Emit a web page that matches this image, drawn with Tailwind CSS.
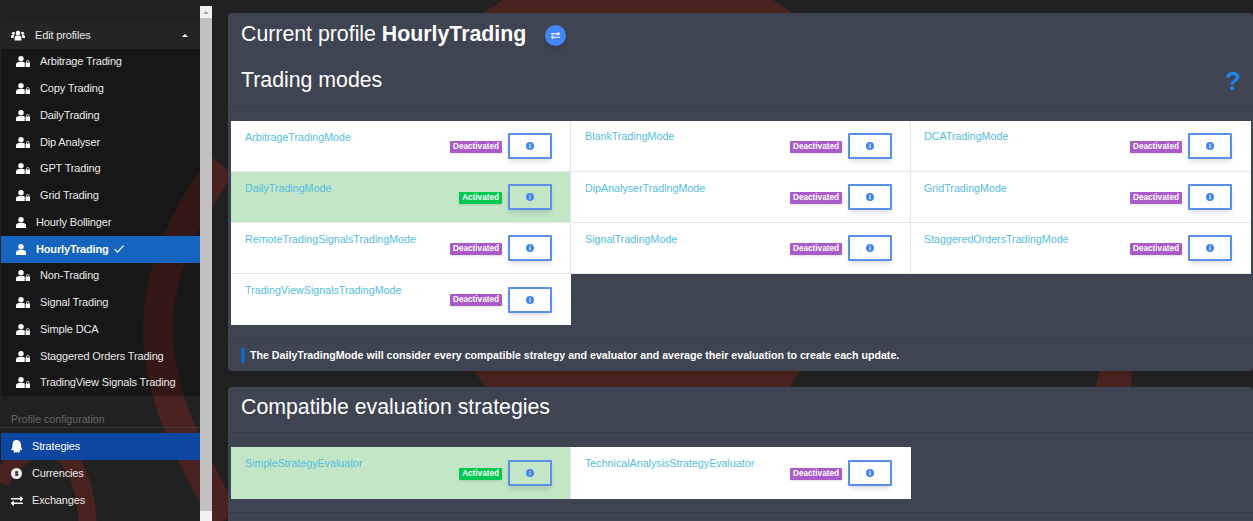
<!DOCTYPE html>
<html lang="en">
<head>
    <meta charset="UTF-8">
    <meta name="viewport" content="width=device-width, initial-scale=1.0">
    <title>Profile</title>
    <script src="https://cdn.jsdelivr.net/npm/@tailwindcss/browser@4"></script>
</head>
<body class="relative h-[521px] overflow-hidden bg-[#212121] font-['Liberation_Sans',Arial,sans-serif] text-white">
    <!-- logo in the page background -->
    <svg class="absolute inset-0" width="1253" height="521" viewBox="0 0 1253 521" fill="none" stroke="#4a2320">
        <path d="M222 165 C185 215 158 270 158 327 C158 400 190 450 225 520" stroke-width="30"/>
        <path d="M0 482 C30 430 85 430 88 530" stroke-width="18"/>
        <path d="M503 0 L773 0 L792 13 L483 13 Z" fill="#4a2320" stroke="none"/>
        <path d="M474 371 L800 371 L790 387 L486 387 Z" fill="#4a2320" stroke="none"/>
        <path d="M1100 371 L1132 371 L1131 387 L1095 387 Z" fill="#4a2320" stroke="none"/>
    </svg>

    <div class="relative flex h-full">
        <!-- sidebar -->
        <aside class="ml-px flex w-[199px] shrink-0 flex-col pt-[22px] text-[11px] leading-[27px] tracking-[-0.15px] text-[#e8e8e8]">
            <div class="flex h-[26.5px] items-center bg-[#242424] pl-[10px] pr-[12px]">
                <svg class="mr-[10px] h-[11px] w-[14px]" viewBox="0 0 14 11" fill="#fff"><circle cx="7" cy="3" r="2.3"/><circle cx="2.4" cy="3.2" r="1.5"/><circle cx="11.6" cy="3.2" r="1.5"/><path d="M3.6 10.5V8c0-1.6 1-2.4 2-2.4h2.8c1 0 2 .8 2 2.4v2.5zM0 8V6.6c0-1 .7-1.6 1.5-1.6h1.6C2.8 6 2.7 7 2.7 8zM14 8V6.6c0-1-.7-1.6-1.500-1.600h-1.600c.3 1 .4 2 .4 3z"/></svg>
                <span class="flex-1">Edit profiles</span>
                <svg class="h-[3px] w-[6px]" viewBox="0 0 6 3" fill="#fff"><path d="M3 0l3 3H0z"/></svg>
            </div>
            <ul class="bg-black/30">
                <li class="flex h-[26.75px] items-center pl-[15px]"><svg class="mr-[10px] h-[11px] w-[14px]" viewBox="0 0 14 11" fill="#fff"><circle cx="5" cy="2.7" r="2.7"/><path d="M0 11V8.800C0 7 1.300 6 3 6h4c.8 0 1.300.2 1.700.5V11z"/><rect x="9.500" y="6.500" width="4.500" height="4.500" rx=".6"/><path d="M10.500 6.800V5.700a1.250 1.250 0 0 1 2.500 0v1.100" stroke="#fff" stroke-width=".8" fill="none"/></svg>Arbitrage Trading</li>
                <li class="flex h-[26.75px] items-center pl-[15px]"><svg class="mr-[10px] h-[11px] w-[14px]" viewBox="0 0 14 11" fill="#fff"><circle cx="5" cy="2.7" r="2.7"/><path d="M0 11V8.800C0 7 1.300 6 3 6h4c.8 0 1.300.2 1.700.5V11z"/><rect x="9.500" y="6.500" width="4.500" height="4.500" rx=".6"/><path d="M10.500 6.800V5.700a1.250 1.250 0 0 1 2.500 0v1.100" stroke="#fff" stroke-width=".8" fill="none"/></svg>Copy Trading</li>
                <li class="flex h-[26.75px] items-center pl-[15px]"><svg class="mr-[10px] h-[11px] w-[14px]" viewBox="0 0 14 11" fill="#fff"><circle cx="5" cy="2.7" r="2.7"/><path d="M0 11V8.800C0 7 1.300 6 3 6h4c.8 0 1.300.2 1.700.5V11z"/><rect x="9.500" y="6.500" width="4.500" height="4.500" rx=".6"/><path d="M10.500 6.800V5.700a1.250 1.250 0 0 1 2.500 0v1.100" stroke="#fff" stroke-width=".8" fill="none"/></svg>DailyTrading</li>
                <li class="flex h-[26.75px] items-center pl-[15px]"><svg class="mr-[10px] h-[11px] w-[14px]" viewBox="0 0 14 11" fill="#fff"><circle cx="5" cy="2.7" r="2.7"/><path d="M0 11V8.800C0 7 1.300 6 3 6h4c.8 0 1.300.2 1.700.5V11z"/><rect x="9.500" y="6.500" width="4.500" height="4.500" rx=".6"/><path d="M10.500 6.800V5.700a1.250 1.250 0 0 1 2.500 0v1.100" stroke="#fff" stroke-width=".8" fill="none"/></svg>Dip Analyser</li>
                <li class="flex h-[26.75px] items-center pl-[15px]"><svg class="mr-[10px] h-[11px] w-[14px]" viewBox="0 0 14 11" fill="#fff"><circle cx="5" cy="2.7" r="2.7"/><path d="M0 11V8.800C0 7 1.300 6 3 6h4c.8 0 1.300.2 1.700.5V11z"/><rect x="9.500" y="6.500" width="4.500" height="4.500" rx=".6"/><path d="M10.500 6.800V5.700a1.250 1.250 0 0 1 2.500 0v1.100" stroke="#fff" stroke-width=".8" fill="none"/></svg>GPT Trading</li>
                <li class="flex h-[26.75px] items-center pl-[15px]"><svg class="mr-[10px] h-[11px] w-[14px]" viewBox="0 0 14 11" fill="#fff"><circle cx="5" cy="2.7" r="2.7"/><path d="M0 11V8.800C0 7 1.300 6 3 6h4c.8 0 1.300.2 1.700.5V11z"/><rect x="9.500" y="6.500" width="4.500" height="4.500" rx=".6"/><path d="M10.500 6.800V5.700a1.250 1.250 0 0 1 2.500 0v1.100" stroke="#fff" stroke-width=".8" fill="none"/></svg>Grid Trading</li>
                <li class="flex h-[26.75px] items-center pl-[15px]"><svg class="mr-[10px] h-[11px] w-[10px]" viewBox="0 0 10 11" fill="#fff"><circle cx="5" cy="2.700" r="2.700"/><path d="M0 11V8.800C0 7 1.300 6 3 6h4c1.700 0 3 1 3 2.800V11z"/></svg>Hourly Bollinger</li>
                <li class="flex h-[26.75px] items-center bg-[#1565c0] pl-[15px] font-bold text-white"><svg class="mr-[10px] h-[11px] w-[10px]" viewBox="0 0 10 11" fill="#fff"><circle cx="5" cy="2.700" r="2.700"/><path d="M0 11V8.800C0 7 1.300 6 3 6h4c1.700 0 3 1 3 2.800V11z"/></svg>HourlyTrading<svg class="ml-[5px] h-[8px] w-[10px]" viewBox="0 0 10 8" fill="none" stroke="#fff" stroke-width="1.200"><path d="M.5 4.200l3 3L9.500.7"/></svg></li>
                <li class="flex h-[26.75px] items-center pl-[15px]"><svg class="mr-[10px] h-[11px] w-[14px]" viewBox="0 0 14 11" fill="#fff"><circle cx="5" cy="2.7" r="2.7"/><path d="M0 11V8.800C0 7 1.300 6 3 6h4c.8 0 1.300.2 1.700.5V11z"/><rect x="9.500" y="6.500" width="4.500" height="4.500" rx=".6"/><path d="M10.500 6.800V5.700a1.250 1.250 0 0 1 2.500 0v1.100" stroke="#fff" stroke-width=".8" fill="none"/></svg>Non-Trading</li>
                <li class="flex h-[26.75px] items-center pl-[15px]"><svg class="mr-[10px] h-[11px] w-[14px]" viewBox="0 0 14 11" fill="#fff"><circle cx="5" cy="2.7" r="2.7"/><path d="M0 11V8.800C0 7 1.300 6 3 6h4c.8 0 1.300.2 1.700.5V11z"/><rect x="9.500" y="6.500" width="4.500" height="4.500" rx=".6"/><path d="M10.500 6.800V5.700a1.250 1.250 0 0 1 2.500 0v1.100" stroke="#fff" stroke-width=".8" fill="none"/></svg>Signal Trading</li>
                <li class="flex h-[26.75px] items-center pl-[15px]"><svg class="mr-[10px] h-[11px] w-[14px]" viewBox="0 0 14 11" fill="#fff"><circle cx="5" cy="2.7" r="2.7"/><path d="M0 11V8.800C0 7 1.300 6 3 6h4c.8 0 1.300.2 1.700.5V11z"/><rect x="9.500" y="6.500" width="4.500" height="4.500" rx=".6"/><path d="M10.500 6.800V5.700a1.250 1.250 0 0 1 2.500 0v1.100" stroke="#fff" stroke-width=".8" fill="none"/></svg>Simple DCA</li>
                <li class="flex h-[26.75px] items-center pl-[15px]"><svg class="mr-[10px] h-[11px] w-[14px]" viewBox="0 0 14 11" fill="#fff"><circle cx="5" cy="2.7" r="2.7"/><path d="M0 11V8.800C0 7 1.300 6 3 6h4c.8 0 1.300.2 1.700.5V11z"/><rect x="9.500" y="6.500" width="4.500" height="4.500" rx=".6"/><path d="M10.500 6.800V5.700a1.250 1.250 0 0 1 2.500 0v1.100" stroke="#fff" stroke-width=".8" fill="none"/></svg>Staggered Orders Trading</li>
                <li class="flex h-[26.75px] items-center pl-[15px]"><svg class="mr-[10px] h-[11px] w-[14px]" viewBox="0 0 14 11" fill="#fff"><circle cx="5" cy="2.7" r="2.7"/><path d="M0 11V8.800C0 7 1.300 6 3 6h4c.8 0 1.300.2 1.700.5V11z"/><rect x="9.500" y="6.500" width="4.500" height="4.500" rx=".6"/><path d="M10.500 6.800V5.700a1.250 1.250 0 0 1 2.500 0v1.100" stroke="#fff" stroke-width=".8" fill="none"/></svg>TradingView Signals Trading</li>
            </ul>
            <div class="mt-[16px] h-[16px] border-b border-[#3a3a3a] pl-[10px] text-[10.6px] leading-[14px] tracking-normal text-[#666]">Profile configuration</div>
            <div class="mt-[5px] flex h-[27px] items-center bg-[#0d47a1] pl-[10px] text-white"><svg class="mr-[10px] h-[13px] w-[11px]" viewBox="0 0 11 13" fill="#fff"><path d="M5.500 0C2.800 0 1.500 2 1.500 4.500 1.500 7 1 8.500 0 10c1 .5 1.700.2 2.300-.5C2.500 11 3 12 3.500 13c.8 0 1.300-1 1.500-2 .2.600.300 1.500.500 2 .5-.2.800-1.200 1-2 .2 1 .7 2 1.500 2 .5-1 1-2 1.200-3.500.6.700 1.300 1 2.300.5-1-1.500-1.500-3-1.500-5.500C9.500 2 8.200 0 5.500 0z"/></svg>Strategies</div>
            <div class="flex h-[27px] items-center pl-[10px]"><svg class="mr-[10px] h-[11px] w-[11px]" viewBox="0 0 11 11"><circle cx="5.500" cy="5.500" r="5.500" fill="#f5f0f0"/><path d="M4.200 3h1.700c1 0 1.400.5 1.400 1.200 0 .6-.3 1-.8 1.100.7.100 1.100.5 1.100 1.200C7.600 7.500 7 8 5.900 8H4.200z" fill="#444"/></svg>Currencies</div>
            <div class="flex h-[27px] items-center pl-[10px]"><svg class="mr-[9px] h-[12px] w-[12px]" viewBox="0 0 512 512" fill="#fff"><path d="M0 168v-16c0-13.255 10.745-24 24-24h360V80c0-21.367 25.899-32.042 40.971-16.971l80 80c9.372 9.373 9.372 24.569 0 33.941l-80 80C409.956 271.982 384 261.456 384 240v-48H24c-13.255 0-24-10.745-24-24zm488 152H128v-48c0-21.314-25.862-32.080-40.971-16.971l-80 80c-9.372 9.373-9.372 24.569 0 33.941l80 80C102.057 463.997 128 453.437 128 432v-48h360c13.255 0 24-10.745 24-24v-16c0-13.255-10.745-24-24-24z"/></svg>Exchanges</div>
        </aside>

        <!-- scrollbar -->
        <div class="mt-[6px] flex h-[515px] w-[12px] shrink-0 flex-col bg-[#f1f1f1]">
            <div class="flex h-[12px] items-center justify-center"><svg class="h-[3px] w-[6px]" viewBox="0 0 6 3" fill="#a3a3a3"><path d="M3 0l3 3H0z"/></svg></div>
            <div class="h-[493px] bg-[#c1c1c1]"></div>
        </div>

        <main class="ml-[16px] w-[1025px] shrink-0 pt-[13px]">
            <!-- trading modes card -->
            <section class="rounded-sm bg-[#3e4451] shadow-md">
                <div class="flex h-[44px] items-center pl-[13px] text-[21.3px]">
                    <span>Current profile <b>HourlyTrading</b></span>
                    <button class="ml-[19px] flex h-[21px] w-[21px] items-center justify-center rounded-full bg-[#4285f4] shadow-md"><svg class="h-[9px] w-[9px]" viewBox="0 0 512 512" fill="#fff"><path d="M0 168v-16c0-13.255 10.745-24 24-24h360V80c0-21.367 25.899-32.042 40.971-16.971l80 80c9.372 9.373 9.372 24.569 0 33.941l-80 80C409.956 271.982 384 261.456 384 240v-48H24c-13.255 0-24-10.745-24-24zm488 152H128v-48c0-21.314-25.862-32.080-40.971-16.971l-80 80c-9.372 9.373-9.372 24.569 0 33.941l80 80C102.057 463.997 128 453.437 128 432v-48h360c13.255 0 24-10.745 24-24v-16c0-13.255-10.745-24-24-24z"/></svg></button>
                </div>
                <div class="flex h-[50px] items-center justify-between border-b border-[#383e49] pb-[2px] pl-[13px] pr-[12px]">
                    <h2 class="text-[21.3px]">Trading modes</h2>
                    <span class="text-[26px] font-bold leading-none text-[#1e88e5]">?</span>
                </div>
                <div class="box-content grid w-[1020px] grid-cols-[340px_340px_340px] pl-[3px] pt-[14px]">
                    <div class="flex h-[51px] justify-between border-r border-b border-[#e6e6e6] bg-white pl-[14px] pr-[18px]"><a class="pt-[9px] text-[10.7px] leading-[14px] text-[#55bde0]">ArbitrageTradingMode</a><div class="flex items-center"><span class="mt-px rounded-[1px] bg-[#ab5bc9] px-[3px] text-[8.2px] font-bold leading-[12px] text-white shadow-sm">Deactivated</span><button class="ml-[6px] flex h-[26px] w-[44px] items-center justify-center rounded-[1px] border-2 border-[#5b90e8] shadow-md"><svg class="h-[8px] w-[8px]" viewBox="0 0 8 8"><circle cx="4" cy="4" r="4" fill="#4285f4"/><rect x="3.400" y="3.400" width="1.200" height="2.800" fill="#fff"/><rect x="3.400" y="1.800" width="1.200" height="1.100" fill="#fff"/></svg></button></div></div>
                    <div class="flex h-[51px] justify-between border-r border-b border-[#e6e6e6] bg-white pl-[14px] pr-[18px]"><a class="pt-[8px] text-[10.7px] leading-[14px] text-[#55bde0]">BlankTradingMode</a><div class="flex items-center"><span class="mt-px rounded-[1px] bg-[#ab5bc9] px-[3px] text-[8.2px] font-bold leading-[12px] text-white shadow-sm">Deactivated</span><button class="ml-[6px] flex h-[26px] w-[44px] items-center justify-center rounded-[1px] border-2 border-[#5b90e8] shadow-md"><svg class="h-[8px] w-[8px]" viewBox="0 0 8 8"><circle cx="4" cy="4" r="4" fill="#4285f4"/><rect x="3.400" y="3.400" width="1.200" height="2.800" fill="#fff"/><rect x="3.400" y="1.800" width="1.200" height="1.100" fill="#fff"/></svg></button></div></div>
                    <div class="flex h-[51px] justify-between border-b border-[#e6e6e6] bg-white pl-[13px] pr-[19px]"><a class="pt-[8px] text-[10.7px] leading-[14px] text-[#55bde0]">DCATradingMode</a><div class="flex items-center"><span class="mt-px rounded-[1px] bg-[#ab5bc9] px-[3px] text-[8.2px] font-bold leading-[12px] text-white shadow-sm">Deactivated</span><button class="ml-[6px] flex h-[26px] w-[44px] items-center justify-center rounded-[1px] border-2 border-[#5b90e8] shadow-md"><svg class="h-[8px] w-[8px]" viewBox="0 0 8 8"><circle cx="4" cy="4" r="4" fill="#4285f4"/><rect x="3.400" y="3.400" width="1.200" height="2.800" fill="#fff"/><rect x="3.400" y="1.800" width="1.200" height="1.100" fill="#fff"/></svg></button></div></div>

                    <div class="flex h-[51px] justify-between border-r border-b border-[#e6e6e6] bg-[#c3e6c7] pl-[14px] pr-[18px]"><a class="pt-[9px] text-[10.7px] leading-[14px] text-[#55bde0]">DailyTradingMode</a><div class="flex items-center"><span class="mt-px rounded-[1px] bg-[#00c851] px-[3px] text-[8.2px] font-bold leading-[12px] text-white shadow-sm">Activated</span><button class="ml-[6px] flex h-[26px] w-[44px] items-center justify-center rounded-[1px] border-2 border-[#5b90e8] shadow-md"><svg class="h-[8px] w-[8px]" viewBox="0 0 8 8"><circle cx="4" cy="4" r="4" fill="#4285f4"/><rect x="3.400" y="3.400" width="1.200" height="2.800" fill="#c3e6c7"/><rect x="3.400" y="1.800" width="1.200" height="1.100" fill="#c3e6c7"/></svg></button></div></div>
                    <div class="flex h-[51px] justify-between border-r border-b border-[#e6e6e6] bg-white pl-[14px] pr-[18px]"><a class="pt-[9px] text-[10.7px] leading-[14px] text-[#55bde0]">DipAnalyserTradingMode</a><div class="flex items-center"><span class="mt-px rounded-[1px] bg-[#ab5bc9] px-[3px] text-[8.2px] font-bold leading-[12px] text-white shadow-sm">Deactivated</span><button class="ml-[6px] flex h-[26px] w-[44px] items-center justify-center rounded-[1px] border-2 border-[#5b90e8] shadow-md"><svg class="h-[8px] w-[8px]" viewBox="0 0 8 8"><circle cx="4" cy="4" r="4" fill="#4285f4"/><rect x="3.400" y="3.400" width="1.200" height="2.800" fill="#fff"/><rect x="3.400" y="1.800" width="1.200" height="1.100" fill="#fff"/></svg></button></div></div>
                    <div class="flex h-[51px] justify-between border-b border-[#e6e6e6] bg-white pl-[13px] pr-[19px]"><a class="pt-[9px] text-[10.7px] leading-[14px] text-[#55bde0]">GridTradingMode</a><div class="flex items-center"><span class="mt-px rounded-[1px] bg-[#ab5bc9] px-[3px] text-[8.2px] font-bold leading-[12px] text-white shadow-sm">Deactivated</span><button class="ml-[6px] flex h-[26px] w-[44px] items-center justify-center rounded-[1px] border-2 border-[#5b90e8] shadow-md"><svg class="h-[8px] w-[8px]" viewBox="0 0 8 8"><circle cx="4" cy="4" r="4" fill="#4285f4"/><rect x="3.400" y="3.400" width="1.200" height="2.800" fill="#fff"/><rect x="3.400" y="1.800" width="1.200" height="1.100" fill="#fff"/></svg></button></div></div>

                    <div class="flex h-[51px] justify-between border-r border-b border-[#e6e6e6] bg-white pl-[14px] pr-[18px]"><a class="pt-[9px] text-[10.7px] leading-[14px] text-[#55bde0]">RemoteTradingSignalsTradingMode</a><div class="flex items-center"><span class="mt-px rounded-[1px] bg-[#ab5bc9] px-[3px] text-[8.2px] font-bold leading-[12px] text-white shadow-sm">Deactivated</span><button class="ml-[6px] flex h-[26px] w-[44px] items-center justify-center rounded-[1px] border-2 border-[#5b90e8] shadow-md"><svg class="h-[8px] w-[8px]" viewBox="0 0 8 8"><circle cx="4" cy="4" r="4" fill="#4285f4"/><rect x="3.400" y="3.400" width="1.200" height="2.800" fill="#fff"/><rect x="3.400" y="1.800" width="1.200" height="1.100" fill="#fff"/></svg></button></div></div>
                    <div class="flex h-[51px] justify-between border-r border-b border-[#e6e6e6] bg-white pl-[14px] pr-[18px]"><a class="pt-[9px] text-[10.7px] leading-[14px] text-[#55bde0]">SignalTradingMode</a><div class="flex items-center"><span class="mt-px rounded-[1px] bg-[#ab5bc9] px-[3px] text-[8.2px] font-bold leading-[12px] text-white shadow-sm">Deactivated</span><button class="ml-[6px] flex h-[26px] w-[44px] items-center justify-center rounded-[1px] border-2 border-[#5b90e8] shadow-md"><svg class="h-[8px] w-[8px]" viewBox="0 0 8 8"><circle cx="4" cy="4" r="4" fill="#4285f4"/><rect x="3.400" y="3.400" width="1.200" height="2.800" fill="#fff"/><rect x="3.400" y="1.800" width="1.200" height="1.100" fill="#fff"/></svg></button></div></div>
                    <div class="flex h-[51px] justify-between border-b border-[#e6e6e6] bg-white pl-[13px] pr-[19px]"><a class="pt-[9px] text-[10.7px] leading-[14px] text-[#55bde0]">StaggeredOrdersTradingMode</a><div class="flex items-center"><span class="mt-px rounded-[1px] bg-[#ab5bc9] px-[3px] text-[8.2px] font-bold leading-[12px] text-white shadow-sm">Deactivated</span><button class="ml-[6px] flex h-[26px] w-[44px] items-center justify-center rounded-[1px] border-2 border-[#5b90e8] shadow-md"><svg class="h-[8px] w-[8px]" viewBox="0 0 8 8"><circle cx="4" cy="4" r="4" fill="#4285f4"/><rect x="3.400" y="3.400" width="1.200" height="2.800" fill="#fff"/><rect x="3.400" y="1.800" width="1.200" height="1.100" fill="#fff"/></svg></button></div></div>

                    <div class="flex h-[51px] justify-between bg-white pl-[14px] pr-[19px]"><a class="pt-[9px] text-[10.7px] leading-[14px] text-[#55bde0]">TradingViewSignalsTradingMode</a><div class="flex items-center"><span class="mt-px rounded-[1px] bg-[#ab5bc9] px-[3px] text-[8.2px] font-bold leading-[12px] text-white shadow-sm">Deactivated</span><button class="ml-[6px] flex h-[26px] w-[44px] items-center justify-center rounded-[1px] border-2 border-[#5b90e8] shadow-md"><svg class="h-[8px] w-[8px]" viewBox="0 0 8 8"><circle cx="4" cy="4" r="4" fill="#4285f4"/><rect x="3.400" y="3.400" width="1.200" height="2.800" fill="#fff"/><rect x="3.400" y="1.800" width="1.200" height="1.100" fill="#fff"/></svg></button></div></div>
                </div>
                <div class="mt-[13px] flex h-[33px] items-center border-t border-[#383e49] pl-[13px]">
                    <p class="border-l-[4px] border-[#1565c0] pl-[5px] text-[10.65px] font-bold leading-[15px]">The DailyTradingMode will consider every compatible strategy and evaluator and average their evaluation to create each update.</p>
                </div>
            </section>

            <!-- strategies card -->
            <section class="mt-[16px] h-[140px] rounded-sm bg-[#3e4451] shadow-md">
                <div class="flex h-[46px] items-center border-b border-[#383e49] pb-[3px] pl-[13px]">
                    <h2 class="text-[21.3px]">Compatible evaluation strategies</h2>
                </div>
                <div class="grid grid-cols-[340px_340px] pl-[3px] pt-[14px]">
                    <div class="flex h-[52px] justify-between border-r border-[#e6e6e6] bg-[#c3e6c7] pl-[14px] pr-[18px]"><a class="pt-[9px] text-[10.7px] leading-[14px] text-[#55bde0]">SimpleStrategyEvaluator</a><div class="flex items-center"><span class="mt-px rounded-[1px] bg-[#00c851] px-[3px] text-[8.2px] font-bold leading-[12px] text-white shadow-sm">Activated</span><button class="ml-[6px] flex h-[26px] w-[44px] items-center justify-center rounded-[1px] border-2 border-[#5b90e8] shadow-md"><svg class="h-[8px] w-[8px]" viewBox="0 0 8 8"><circle cx="4" cy="4" r="4" fill="#4285f4"/><rect x="3.400" y="3.400" width="1.200" height="2.800" fill="#c3e6c7"/><rect x="3.400" y="1.800" width="1.200" height="1.100" fill="#c3e6c7"/></svg></button></div></div>
                    <div class="flex h-[52px] justify-between bg-white pl-[14px] pr-[19px]"><a class="pt-[9px] text-[10.7px] leading-[14px] text-[#55bde0]">TechnicalAnalysisStrategyEvaluator</a><div class="flex items-center"><span class="mt-px rounded-[1px] bg-[#ab5bc9] px-[3px] text-[8.2px] font-bold leading-[12px] text-white shadow-sm">Deactivated</span><button class="ml-[6px] flex h-[26px] w-[44px] items-center justify-center rounded-[1px] border-2 border-[#5b90e8] shadow-md"><svg class="h-[8px] w-[8px]" viewBox="0 0 8 8"><circle cx="4" cy="4" r="4" fill="#4285f4"/><rect x="3.400" y="3.400" width="1.200" height="2.800" fill="#fff"/><rect x="3.400" y="1.800" width="1.200" height="1.100" fill="#fff"/></svg></button></div></div>
                </div>
                <div class="mt-[13px] border-t border-[#383e49]"></div>
            </section>
        </main>
    </div>
</body>
</html>
